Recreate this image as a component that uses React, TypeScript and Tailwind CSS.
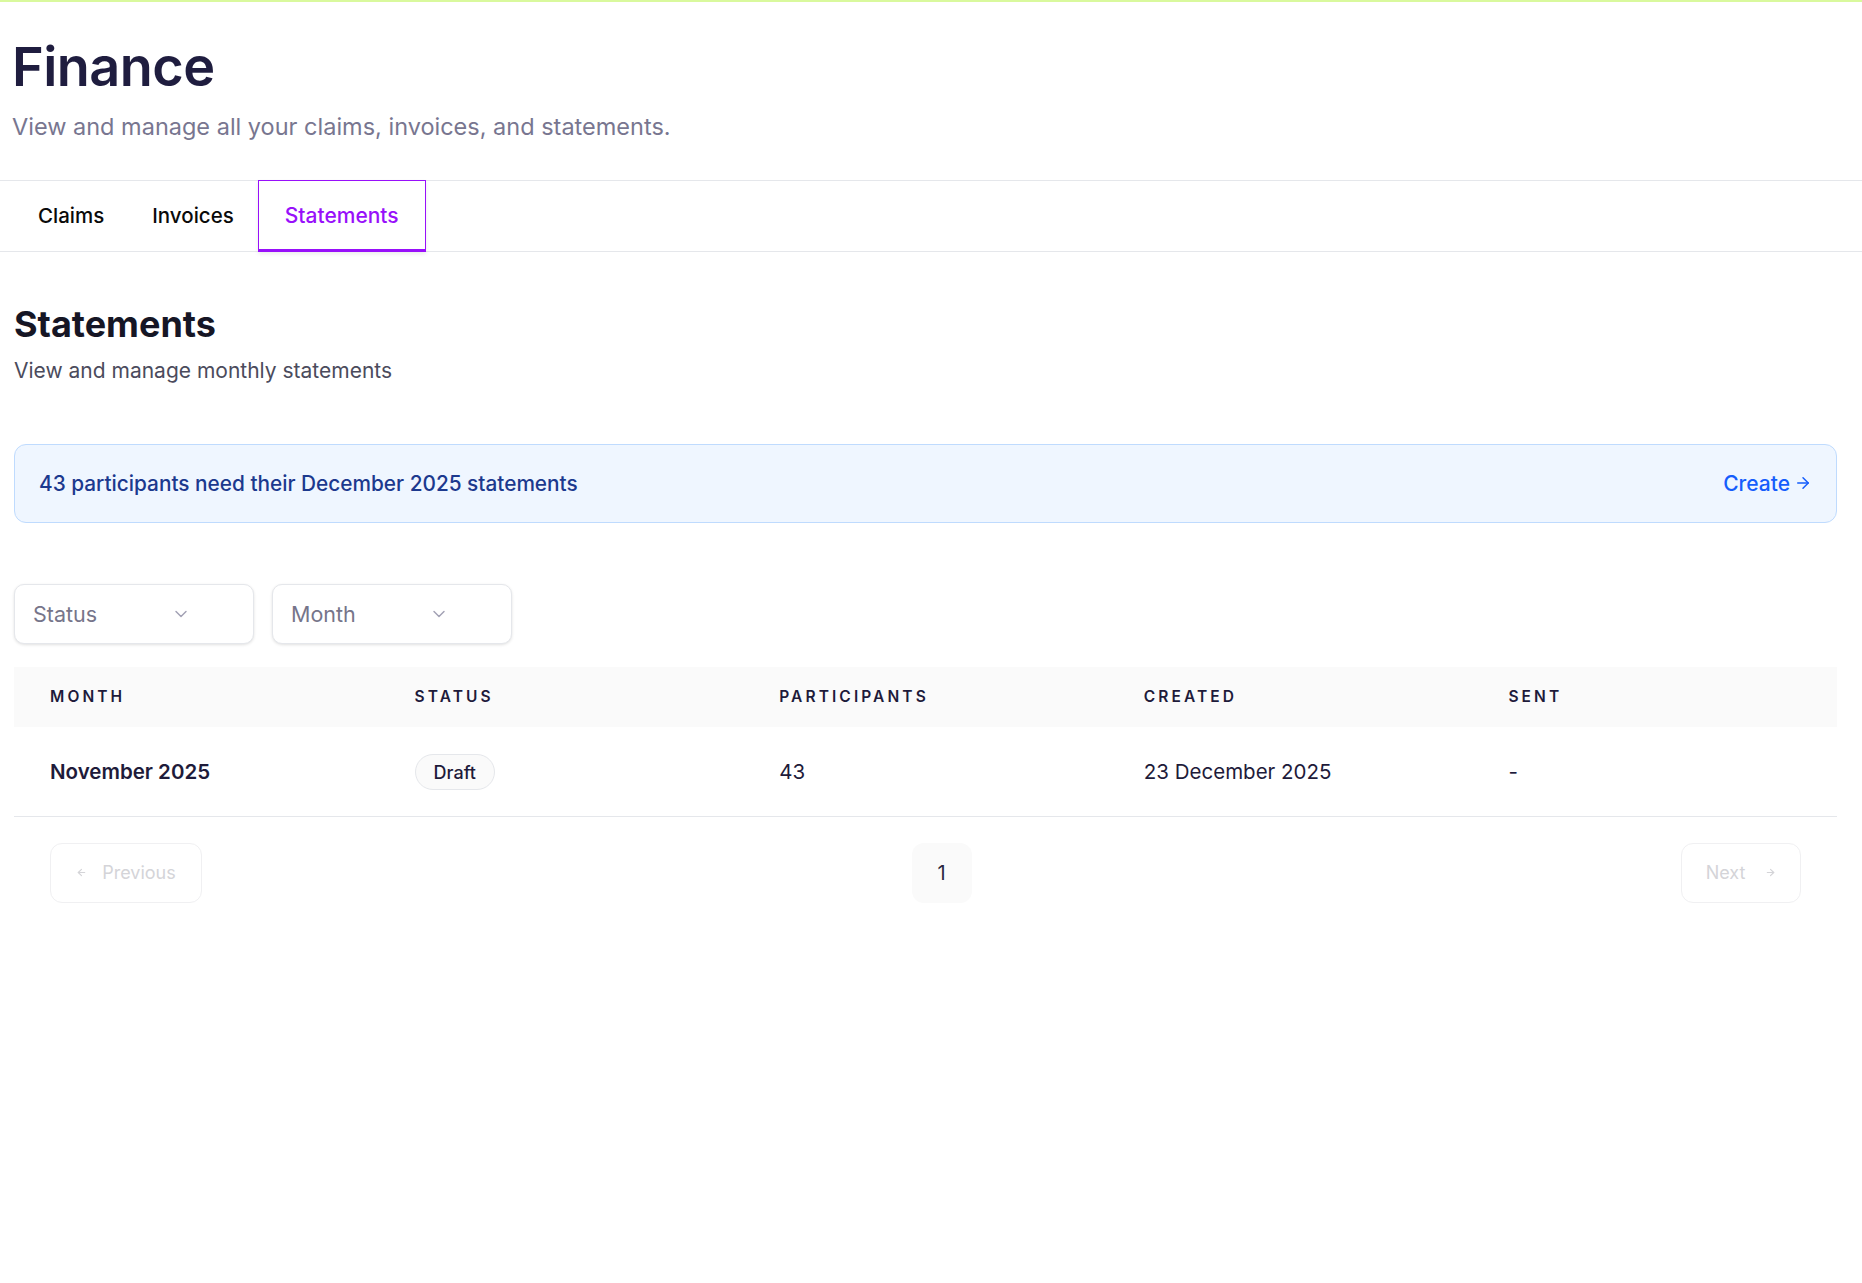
import { ArrowLeft, ArrowRight, ChevronDown } from 'lucide-react';

type Statement = {
  month: string;
  status: string;
  participants: number;
  created: string;
  sent: string;
};

const statements: Statement[] = [
  { month: 'November 2025', status: 'Draft', participants: 43, created: '23 December 2025', sent: '-' },
];

const tabs = ['Claims', 'Invoices', 'Statements'];

function FilterSelect({ label }: { label: string }) {
  return (
    <button className="flex h-[60px] w-[240px] items-center rounded-[10px] border border-[#e5e7eb] bg-white pl-[18px] text-left shadow-[0_1px_3px_rgba(0,0,0,0.12)]">
      <span className="w-[138px] text-[21.5px] text-[#76758a]">{label}</span>
      <ChevronDown size={20} strokeWidth={1.75} className="text-[#a3a2b5]" />
    </button>
  );
}

function StatementsTable() {
  const headers = ['Month', 'Status', 'Participants', 'Created', 'Sent'];
  return (
    <div>
      <div className="grid h-[60px] grid-cols-5 items-center bg-[#fafafa]">
        {headers.map((h) => (
          <div key={h} className="pl-[36px] text-[15.5px] font-semibold uppercase tracking-[0.2em] text-[#1e1b3a]">
            {h}
          </div>
        ))}
      </div>
      {statements.map((s) => (
        <div key={s.month} className="grid h-[90px] grid-cols-5 items-center border-b border-[#e5e7eb] pt-[2px] text-[20.5px] text-[#1e1b3a]">
          <div className="pl-[36px] font-semibold">{s.month}</div>
          <div className="pl-[36px]">
            <span className="inline-flex h-[36px] items-center rounded-full border border-[#e5e7eb] bg-[#fafafa] px-[18px] text-[18px] font-medium">
              {s.status}
            </span>
          </div>
          <div className="pl-[36px]">{s.participants}</div>
          <div className="pl-[36px]">{s.created}</div>
          <div className="pl-[36px]">{s.sent}</div>
        </div>
      ))}
      <div className="flex items-center justify-between px-[36px] pt-[26px]">
        <button className="flex h-[60px] w-[152px] items-center justify-center gap-[15px] rounded-[12px] border border-[#f0f0f2] text-[18px] text-[#d4d4d8]">
          <ArrowLeft size={11} strokeWidth={2.5} />
          Previous
        </button>
        <button className="flex h-[60px] w-[60px] items-center justify-center rounded-[12px] bg-[#fafafa] text-[20px] text-[#2a2840]">
          1
        </button>
        <button className="flex h-[60px] w-[120px] items-center justify-center gap-[20px] rounded-[12px] border border-[#f0f0f2] text-[18px] text-[#d4d4d8]">
          Next
          <ArrowRight size={11} strokeWidth={2.5} />
        </button>
      </div>
    </div>
  );
}

export default function App() {
  return (
    <div className="min-h-screen border-t-2 border-[#d9f99d] bg-white font-['Inter',sans-serif]">
      <header className="pl-[12px] pr-[25px] pt-[38px] pb-[36px]">
        <h1 className="text-[54px] font-semibold leading-none tracking-[-0.01em] text-[#1f1d3f]">Finance</h1>
        <p className="mt-[15px] text-[23.5px] text-[#787690]">View and manage all your claims, invoices, and statements.</p>
      </header>

      <nav className="flex h-[72px] border-y border-[#e5e7eb] pl-[14px]">
        {tabs.map((t) => {
          const active = t === 'Statements';
          return (
            <button
              key={t}
              className={
                active
                  ? 'relative -mt-px flex h-[72px] items-center border border-b-[3px] border-[#9810fa] px-[26px] text-[21px] font-medium text-[#9810fa] shadow-[0_2px_4px_rgba(0,0,0,0.08)]'
                  : 'flex items-center px-[24px] text-[20.5px] font-medium text-[#0a0a0a]'
              }
            >
              {t}
            </button>
          );
        })}
      </nav>

      <main className="pl-[14px] pr-[25px]">
        <div className="pt-[50px]">
          <h2 className="text-[36px] font-bold leading-tight text-[#161625]">Statements</h2>
          <p className="mt-[8px] text-[21px] text-[#4b4b5c]">View and manage monthly statements</p>
        </div>

        <div className="mt-[57px] flex h-[79px] items-center justify-between rounded-[12px] border border-[#bfdbfe] bg-[#eff6ff] px-[24px]">
          <span className="text-[20.8px] font-medium text-[#1c398e]">43 participants need their December 2025 statements</span>
          <a href="#" className="flex items-center gap-[4px] text-[21px] font-medium text-[#155dfc]">
            Create
            <ArrowRight size={18} strokeWidth={2} />
          </a>
        </div>

        <div className="mt-[61px] flex gap-[18px]">
          <FilterSelect label="Status" />
          <FilterSelect label="Month" />
        </div>

        <div className="mt-[23px]">
          <StatementsTable />
        </div>
      </main>
    </div>
  );
}
